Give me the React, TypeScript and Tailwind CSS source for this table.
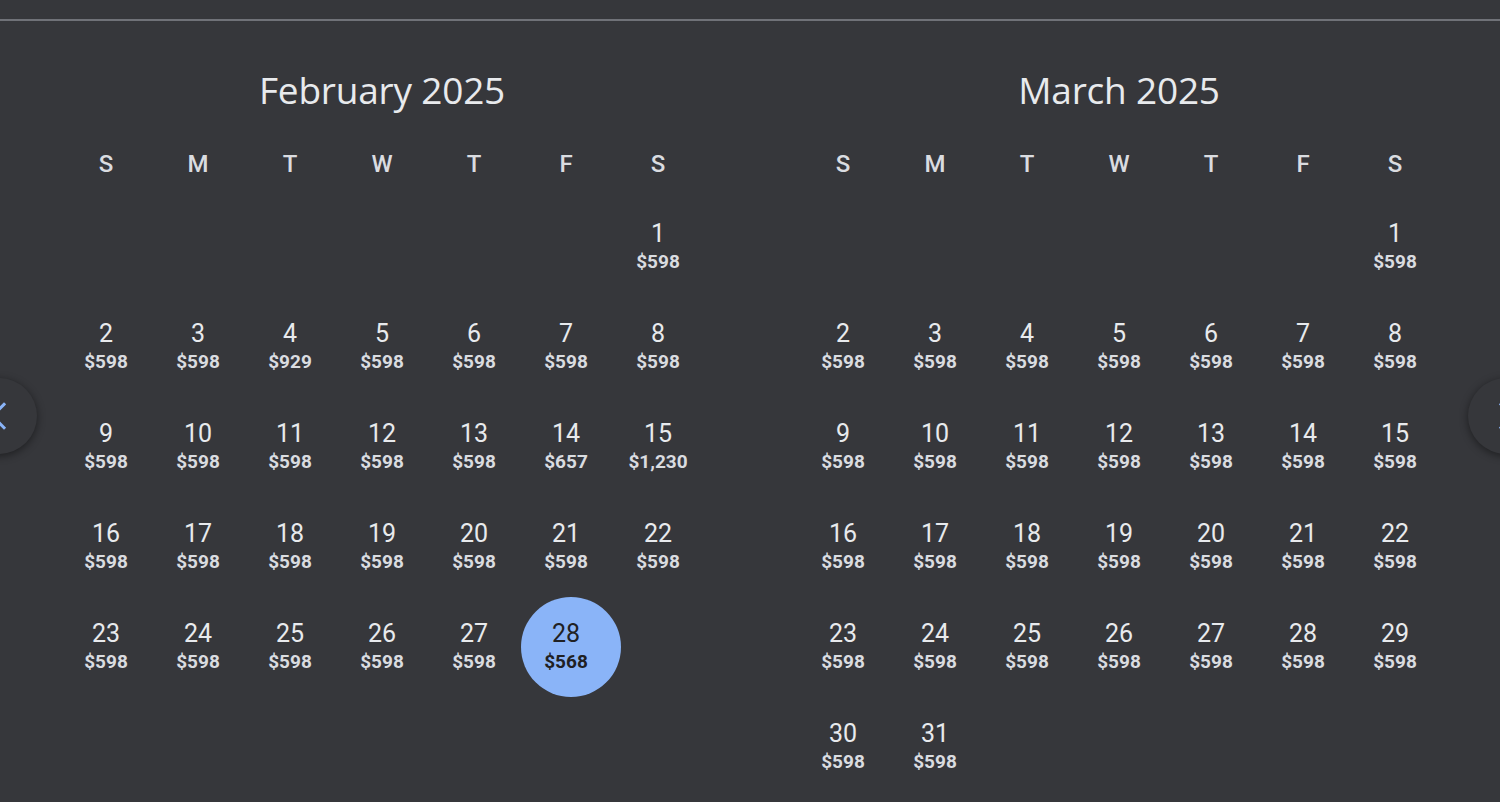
import React from "react";

type Day = { d: number; price: string } | null;

const WEEKDAYS = ["S", "M", "T", "W", "T", "F", "S"];

function buildMonth(offset: number, days: number, prices: Record<number, string>, fallback: string): Day[] {
	const cells: Day[] = [];
	for (let i = 0; i < offset; i++) cells.push(null);
	for (let d = 1; d <= days; d++) cells.push({ d, price: prices[d] ?? fallback });
	return cells;
}

const FEB = buildMonth(6, 28, { 4: "$929", 14: "$657", 15: "$1,230", 28: "$568" }, "$598");
const MAR = buildMonth(6, 31, {}, "$598");

function MonthGrid({ title, cells, selected }: { title: string; cells: Day[]; selected?: number }) {
	return (
		<section className="w-[644px] shrink-0">
			<h2 className="text-center text-[37px] leading-[44px] text-[#e8eaed] [font-family:'Open_Sans',sans-serif] tracking-[-0.2px]">
				{title}
			</h2>
			<div className="mt-[38px] mb-[22px] grid grid-cols-7">
				{WEEKDAYS.map((w, i) => (
					<div key={i} className="text-center text-[24px] leading-[28px] font-medium text-[#dadce0]">
						{w}
					</div>
				))}
			</div>
			<div className="grid grid-cols-7">
				{cells.map((c, i) => (
					<div key={i} className="relative flex h-[100px] flex-col items-center pt-[20px]">
						{c && c.d === selected ? (
							<div className="absolute left-[1px] top-[-3px] h-[100px] w-[100px] rounded-full bg-[#8ab4f8]" />
						) : null}
						{c ? (
							<>
								<span
									className={`relative text-[25px] leading-[28px] ${c.d === selected ? "text-[#202124]" : "text-[#e8eaed]"}`}
								>
									{c.d}
								</span>
								<span
									className={`relative mt-[3px] text-[19px] leading-[22px] font-bold ${c.d === selected ? "text-[#202124]" : "text-[#dadce0]"}`}
								>
									{c.price}
								</span>
							</>
						) : null}
					</div>
				))}
			</div>
		</section>
	);
}

function NavButton({ side }: { side: "left" | "right" }) {
	const pos = side === "left" ? "left-[-39px]" : "left-[1468px]";
	return (
		<button
			type="button"
			className={`absolute top-[378px] ${pos} flex h-[76px] w-[76px] items-center justify-center rounded-full bg-[#36373b] shadow-[0_2px_8px_rgba(0,0,0,0.45)]`}
		>
			<svg width="40" height="40" viewBox="0 0 24 24" fill="none" stroke="#8ab4f8" strokeWidth="1.8" strokeLinecap="square">
				{side === "left" ? <path d="M15 5l-7 7 7 7" /> : <path d="M9 5l7 7-7 7" />}
			</svg>
		</button>
	);
}

export default function App() {
	return (
		<div className="relative h-[802px] w-[1500px] overflow-hidden bg-[#36373b] [font-family:Roboto,'Liberation_Sans',sans-serif]">
			<div className="h-[21px] border-b-2 border-[#707278]" />
			<div className="flex gap-[93px] pl-[60px] pt-[47px]">
				<MonthGrid title="February 2025" cells={FEB} selected={28} />
				<MonthGrid title="March 2025" cells={MAR} />
			</div>
			<NavButton side="left" />
			<NavButton side="right" />
		</div>
	);
}
